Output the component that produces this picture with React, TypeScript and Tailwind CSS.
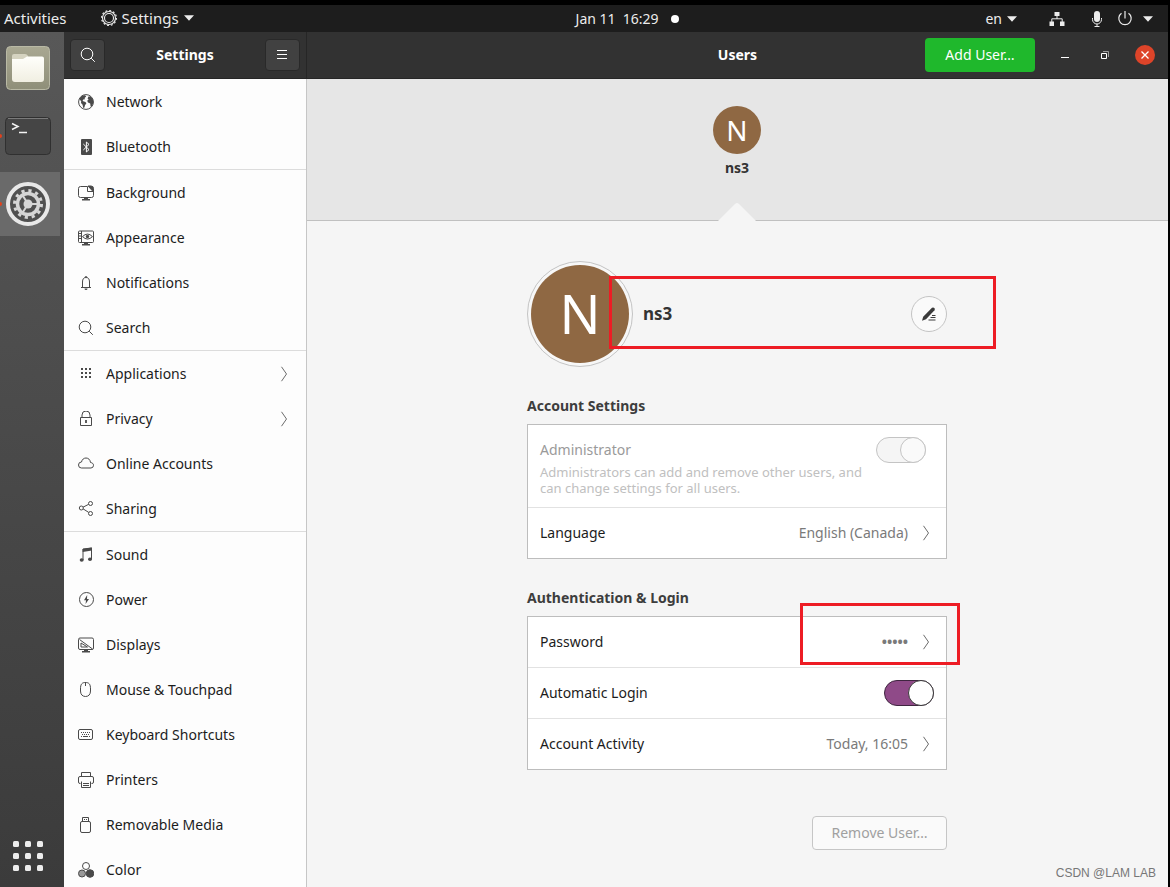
import React from 'react';

type IconProps = { children: React.ReactNode; className?: string };

function Glyph({ children, className = 'size-4' }: IconProps) {
  return (
    <svg viewBox="0 0 16 16" className={className} fill="none" stroke="currentColor" strokeWidth="1" aria-hidden="true">
      {children}
    </svg>
  );
}

const icons: Record<string, React.ReactNode> = {
  Network: (
    <>
      <circle cx="8" cy="8" r="7.4" />
      <path d="M1.2 5 3.8 1.8 7 1.2 8.2 2.6 6.6 4 7 5.2 5.2 5.6 4.6 7 7.4 8 8.4 9.2 7 11.2 6.4 13.6 5.2 14 4.6 10.8 3 9 3.2 7.2Z" fill="currentColor" stroke="none" />
      <path d="M9.6 4.4 10.4 2.6 12.6 2.4 15 5.6 15.4 9 13.8 12.2 12.6 12.6 12.2 9.4 10 8.6 9.2 6.8 10.6 5.4Z" fill="currentColor" stroke="none" />
    </>
  ),
  Bluetooth: (
    <>
      <rect x="3" y="0" width="11" height="16" rx="1" fill="currentColor" stroke="none" />
      <path d="M5.3 5 11 10.6 8.4 13V3L11 5.4 5.3 11" stroke="#fff" />
    </>
  ),
  Background: (
    <>
      <path d="M9.5 1.5h-7a2 2 0 0 0-2 2v7a2 2 0 0 0 2 2h11a2 2 0 0 0 2-2V6.5" />
      <path d="M10 1h3a2.5 2.5 0 0 1 2.5 2.5V7Z" fill="currentColor" />
      <path d="M9.5 1.5v5h6" />
      <path d="M6 12h4v2h2v1.5H4V14h2Z" fill="currentColor" stroke="none" />
    </>
  ),
  Appearance: (
    <>
      <rect x=".5" y="1" width="15" height="11.5" rx="1" />
      <path d="M3.5 1v11M1 3.5h2M1 6h2M1 8.5h2M4.5 6.6Q9.5 1.5 14.5 6.6 9.5 11.5 4.5 6.6Z" />
      <circle cx="9.5" cy="6.5" r="1.7" fill="currentColor" stroke="none" />
      <path d="M6 12h4v2h2v1.5H4V14h2Z" fill="currentColor" stroke="none" />
    </>
  ),
  Notifications: (
    <>
      <path d="M3 12.5h10M4.5 12.5V7a3.5 4.5 0 0 1 7 0v5.5M7 2.5a1 1 0 0 1 2 0" />
      <path d="M6.5 13.5h3a1.5 1.5 0 0 1-3 0Z" fill="currentColor" stroke="none" />
    </>
  ),
  Search: (
    <>
      <circle cx="7" cy="7" r="5.8" />
      <path d="m11.2 11.2 3.6 3.6" />
    </>
  ),
  Applications: (
    <path d="M3 3h2m2 0h2m2 0h2M3 7h2m2 0h2m2 0h2M3 11h2m2 0h2m2 0h2" strokeWidth="2" />
  ),
  Privacy: (
    <>
      <path d="M2.5 6.5h11v8h-11ZM4 6.5V4a4 4 0 0 1 8 0v2.5" />
      <path d="M8 9v3" strokeWidth="1.8" />
    </>
  ),
  'Online Accounts': (
    <path d="M3.500 12a3 3 0 0 1 0-6C4 3.500 5.800 2 8 2s4.200 1.500 4.500 4.500c1.800.2 3 1.200 3 2.800A2.700 2.700 0 0 1 13 12Z" />
  ),
  Sharing: (
    <>
      <circle cx="3.3" cy="7" r="2" />
      <circle cx="12.5" cy="2.5" r="2" />
      <circle cx="12.5" cy="12.5" r="2" />
      <path d="m5 6.200 5.700-2.900M5 7.800l5.700 3.600" />
    </>
  ),
  Sound: (
    <>
      <path d="M5 13V2l8.500-1v11" />
      <path d="M4.600 2 14 .6v3L4.600 5Z" fill="currentColor" stroke="none" />
      <ellipse cx="3.700" cy="13" rx="2" ry="1.800" fill="currentColor" stroke="none" />
      <ellipse cx="12" cy="12.200" rx="2" ry="1.800" fill="currentColor" stroke="none" />
    </>
  ),
  Power: (
    <>
      <circle cx="8.500" cy="7.500" r="7" />
      <path d="M9.200 3 6 8.200h2L7.600 12 11 7H9Z" fill="currentColor" stroke="none" />
    </>
  ),
  Displays: (
    <>
      <rect x=".5" y="1" width="15" height="11.5" rx="1.5" />
      <path d="M1.500 2.500 14.500 12M3 6v4h6.500Z" />
      <path d="M6 12h4v2h2v1.500H4V14h2Z" fill="currentColor" stroke="none" />
    </>
  ),
  'Mouse & Touchpad': (
    <>
      <path d="M7.500.5C4 .5 2.500 2 2.500 7v2c0 3.500 2 5.500 5 5.500s5-2 5-5.500V7c0-5-1.500-6.500-5-6.500Z" />
      <path d="M7.500 0v4" />
    </>
  ),
  'Keyboard Shortcuts': (
    <>
      <rect x=".5" y="2.500" width="14" height="10" rx="1.500" />
      <path d="M3 5.500h1m1 0h1m1 0h1m1 0h1m1 0h1M4 7.500h1m1 0h1m1 0h1m1 0h1M3 9.500h1m1 0h5m1 0h1" />
    </>
  ),
  Printers: (
    <>
      <path d="M3.500 4V.5h9V4M2.500 11.500H2A1.500 1.500 0 0 1 .5 10V6A1.500 1.500 0 0 1 2 4.500h12A1.500 1.500 0 0 1 15.500 6v4a1.500 1.500 0 0 1-1.500 1.500h-.5" />
      <path d="M3.500 9.500v6h9v-6M5 11.500h6M5 13.500h6" />
    </>
  ),
  'Removable Media': (
    <>
      <rect x="2.500" y="4.500" width="10" height="11" rx="1.500" />
      <path d="M4.500 4V.5h6V4M6 2.500h1m1 0h1" />
    </>
  ),
  Color: (
    <>
      <circle cx="8" cy="4" r="3.500" fill="#fff" />
      <circle cx="4" cy="11.500" r="3.500" fill="#999" />
      <circle cx="12" cy="11.500" r="3.800" fill="currentColor" />
    </>
  ),
};

const groups = [
  ['Network', 'Bluetooth'],
  ['Background', 'Appearance', 'Notifications', 'Search'],
  ['Applications', 'Privacy', 'Online Accounts', 'Sharing'],
  ['Sound', 'Power', 'Displays', 'Mouse & Touchpad', 'Keyboard Shortcuts', 'Printers', 'Removable Media', 'Color'],
];

const submenus = ['Applications', 'Privacy'];

function Chevron() {
  return (
    <svg viewBox="0 0 8 16" className="h-4 w-2 shrink-0" fill="none" stroke="#6b6b6b" aria-hidden="true">
      <path d="m1.500.8 5 7.200-5 7.200" />
    </svg>
  );
}

function Caret() {
  return (
    <svg viewBox="0 0 10 6" className="h-1.5 w-2.5" fill="currentColor" aria-hidden="true">
      <path d="M0 .3h10L5 5.800Z" />
    </svg>
  );
}

function TopBar() {
  return (
    <header className="grid h-8 shrink-0 grid-cols-[574fr_auto_488fr] items-center border-t-5 border-black bg-[#1d1d1d] text-[#ececec]">
      <div className="flex items-center gap-[34px] pl-1 text-[15px]">
        <button>Activities</button>
        <button className="flex items-center gap-[5px]">
          <svg viewBox="0 0 16 16" className="size-4" fill="none" stroke="currentColor" aria-hidden="true">
            <circle cx="8" cy="8" r="7.4" strokeWidth="1.200" strokeDasharray="1.900 1.975" />
            <circle cx="8" cy="8" r="6.500" strokeWidth="1.100" />
            <circle cx="8" cy="8" r="4.500" strokeWidth="1.100" />
          </svg>
          <span>Settings</span>
          <Caret />
        </button>
      </div>
      <button className="flex items-center gap-3">
        <span className="whitespace-pre">Jan 11  16:29</span>
        <span className="size-2 rounded-full bg-white" />
      </button>
      <div className="flex items-center justify-end pr-[15px]">
        <button className="mr-8 flex items-center gap-[5px]">
          <span>en</span>
          <Caret />
        </button>
        <button className="flex items-center" aria-label="System menu">
          <Glyph className="mr-6 size-4">
            <path d="M5.500 1h5v4h-5ZM.5 10.500h4.500V15H.5ZM11 10.500h4.500V15H11Z" fill="currentColor" stroke="none" />
            <path d="M8 5v3M2.800 11V7.800h10.400V11" />
          </Glyph>
          <Glyph className="mr-3 size-4">
            <rect x="5" y="0" width="6" height="11" rx="3" fill="currentColor" stroke="none" />
            <path d="M3.500 7v1.500a4.500 4.500 0 0 0 9 0V7M8 13v2.500M5.500 15.500h5" />
          </Glyph>
          <Glyph className="mr-2.5 size-4">
            <path d="M4.500 2.300a6.200 6.200 0 1 0 7 0M8 0v7.500" strokeWidth="1.200" />
          </Glyph>
          <Caret />
        </button>
      </div>
    </header>
  );
}

function Launcher() {
  return (
    <nav className="flex w-16 shrink-0 flex-col gap-1 bg-linear-to-b from-[#585858] via-[#494949] to-[#3b3b3b] pt-1 pr-1">
      <button className="flex h-16 items-center justify-center pr-1" aria-label="Files">
        <svg viewBox="0 0 44 44" className="size-11">
          <defs>
            <linearGradient id="paper" x1="0" y1="0" x2="0" y2="1">
              <stop offset="0" stopColor="#fffffb" />
              <stop offset="1" stopColor="#f1efe2" />
            </linearGradient>
            <linearGradient id="case" x1="0" y1="0" x2="0" y2="1">
              <stop offset="0" stopColor="#a9a892" />
              <stop offset="1" stopColor="#8f8f79" />
            </linearGradient>
          </defs>
          <rect x=".5" y=".5" width="43" height="43" rx="4" fill="url(#case)" stroke="#b9b9a5" />
          <path d="M6 13V10q0-2 2-2h11q2 0 3 2l1 3Z" fill="#d5d3c0" />
          <path d="M6 13h11l4-2.500h15q2 0 2 2V33q0 3-3 3H9q-3 0-3-3Z" fill="url(#paper)" />
        </svg>
      </button>
      <button className="relative flex h-16 items-center justify-center pr-1" aria-label="Terminal">
        <span className="absolute left-0 h-1 w-0.5 rounded-r bg-[#e2401c]" />
        <svg viewBox="0 0 46 38" className="h-[38px] w-[46px]" fill="none">
          <rect x=".5" y=".5" width="45" height="37" rx="4" fill="#454545" stroke="#303030" />
          <path d="M3 1.500h40" stroke="#7a7a7a" />
          <path d="m7 6.500 6 3-6 3M14 15.500h8" stroke="#f3f3f3" strokeWidth="1.500" />
        </svg>
      </button>
      <button className="relative flex h-16 items-center justify-center bg-[#6a6a6a] pr-1" aria-label="Settings">
        <span className="absolute left-0 h-1 w-0.5 rounded-r bg-[#e2401c]" />
        <svg viewBox="0 0 44 44" className="size-11" fill="none" stroke="#d6d6d6">
          <circle cx="22" cy="22" r="20" fill="#505050" stroke="#e8e8e8" strokeWidth="4" />
          <circle cx="22" cy="22" r="13.500" strokeWidth="3" strokeDasharray="3.200 3.868" />
          <circle cx="22" cy="22" r="10.500" strokeWidth="3.500" />
          <circle cx="22" cy="22" r="4.500" fill="#d6d6d6" stroke="none" />
          <path d="M22 22h9M22 22l-5-8M22 22l-5 8" strokeWidth="2" />
        </svg>
      </button>
      <button className="mt-auto flex h-[62px] items-center justify-center pr-1" aria-label="Show Applications">
        <svg viewBox="0 0 30 30" className="size-[30px]" fill="#ededed">
          {[0, 12, 24].map((y) =>
            [0, 12, 24].map((x) => <rect key={`${x}-${y}`} x={x} y={y} width="6" height="6" rx="1.500" />)
          )}
        </svg>
      </button>
    </nav>
  );
}

function Sidebar() {
  return (
    <aside className="flex w-[243px] shrink-0 flex-col border-r border-[#c6c6c6] bg-[#fdfdfd]">
      <div className="-mr-px flex h-[47px] shrink-0 items-center justify-between border-r border-b border-[#262626] bg-[#323232] px-1.5 text-white">
        <button className="flex h-8 w-[35px] items-center justify-center rounded border border-[#292929] bg-[#414141]" aria-label="Search">
          <Glyph>{icons.Search}</Glyph>
        </button>
        <h2 className="font-bold">Settings</h2>
        <button className="flex h-8 w-[35px] items-center justify-center rounded border border-[#292929] bg-[#414141]" aria-label="Menu">
          <Glyph>
            <path d="M3 3.500h10M3 7.500h10M3 11.500h10" />
          </Glyph>
        </button>
      </div>
      <div className="flex-1 overflow-hidden">
        {groups.map((group) => (
          <ul key={group[0]} className="border-b border-[#dcdcdc]">
            {group.map((name) => (
              <li key={name}>
                <a href="#" className="flex h-[45px] items-center gap-3 pr-[18px] pl-3.5 text-[#1c1c1c]">
                  <span className="text-[#4a4a4a]">
                    <Glyph>{icons[name]}</Glyph>
                  </span>
                  <span className="flex-1">{name}</span>
                  {submenus.includes(name) && <Chevron />}
                </a>
              </li>
            ))}
          </ul>
        ))}
      </div>
    </aside>
  );
}

function TitleBar() {
  return (
    <div className="grid h-[47px] shrink-0 grid-cols-[1fr_auto_1fr] items-center border-b border-[#262626] bg-[#323232] px-[13px] text-white">
      <span />
      <h1 className="font-bold">Users</h1>
      <div className="flex items-center justify-end">
        <button className="mr-[22px] h-[34px] w-[110px] rounded bg-[#1fb82c]">Add User…</button>
        <button className="mr-6 flex size-4 items-center justify-center" aria-label="Minimize">
          <Glyph>
            <path d="M4 10.500h8" />
          </Glyph>
        </button>
        <button className="mr-[22px] flex size-4 items-center justify-center" aria-label="Restore">
          <Glyph>
            <path d="M4.500 6.500h5v5h-5Z" />
            <path d="M6 4.500h5.500V10" stroke="#9a9a9a" />
          </Glyph>
        </button>
        <button className="flex size-5 items-center justify-center rounded-full bg-[#dd4429]" aria-label="Close">
          <Glyph>
            <path d="m4.500 4.500 7 7m0-7-7 7" strokeWidth="1.300" />
          </Glyph>
        </button>
      </div>
    </div>
  );
}

function AccountSettings() {
  return (
    <section>
      <h3 className="mb-2 font-bold text-[#3d3d3d]">Account Settings</h3>
      <div className="border border-[#bdbdbd] bg-white">
        <div className="flex h-[83px] items-start justify-between border-b border-[#e2e2e2] pt-3 pr-5 pl-3">
          <div className="pt-[3px]">
            <label htmlFor="administrator" className="block text-[#9a9a9a]">Administrator</label>
            <p className="w-[328px] pt-1 text-[13px] leading-4 text-[#c0c0c0]">
              Administrators can add and remove other users, and can change settings for all users.
            </p>
          </div>
          <input
            id="administrator"
            type="checkbox"
            disabled
            defaultChecked
            className="flex h-[26px] w-[50px] shrink-0 appearance-none justify-end rounded-full border border-[#c4c4c4] bg-[#f5f5f5] before:-m-px before:size-[26px] before:rounded-full before:border before:border-[#c4c4c4] before:bg-[#fafafa]"
          />
        </div>
        <button className="flex h-[50px] w-full items-center pr-4 pl-3 text-left">
          <span className="flex-1 text-[#1c1c1c]">Language</span>
          <span className="mr-3.5 text-[#7a7a7a]">English (Canada)</span>
          <Chevron />
        </button>
      </div>
    </section>
  );
}

function Authentication() {
  return (
    <section>
      <h3 className="mb-2 font-bold text-[#3d3d3d]">Authentication &amp; Login</h3>
      <div className="border border-[#bdbdbd] bg-white">
        <div className="relative">
          <button className="flex h-[51px] w-full items-center border-b border-[#e2e2e2] pr-4 pl-3 text-left">
            <span className="flex-1 text-[#1c1c1c]">Password</span>
            <span className="mr-3.5 font-bold text-[#7a7a7a]">•••••</span>
            <Chevron />
          </button>
          <div className="pointer-events-none absolute -top-3.5 -right-3.5 h-[62px] w-40 border-3 border-[#ed1c24]" />
        </div>
        <div className="flex h-[51px] items-center justify-between border-b border-[#e2e2e2] px-3">
          <label htmlFor="autologin" className="text-[#1c1c1c]">Automatic Login</label>
          <input
            id="autologin"
            type="checkbox"
            defaultChecked
            className="flex h-[26px] w-[50px] appearance-none rounded-full border border-[#3f2540] bg-[#8f4a88] before:-m-px before:size-[26px] before:rounded-full before:border before:border-[#3a3a3a] before:bg-white checked:justify-end"
          />
        </div>
        <button className="flex h-[50px] w-full items-center pr-4 pl-3 text-left">
          <span className="flex-1 text-[#1c1c1c]">Account Activity</span>
          <span className="mr-3.5 text-[#7a7a7a]">Today, 16:05</span>
          <Chevron />
        </button>
      </div>
    </section>
  );
}

function UsersPanel() {
  return (
    <main className="relative flex min-w-0 flex-1 flex-col bg-[#f5f5f5]">
      <TitleBar />
      {/* user carousel */}
      <div className="relative flex h-[142px] shrink-0 flex-col items-center border-b border-[#c0c0c0] bg-[#e6e6e6] pt-[27px] pr-px">
        <button className="flex flex-col items-center gap-1">
          <span className="flex size-12 items-center justify-center rounded-full bg-[#8f6843] text-[28px] text-white">N</span>
          <span className="font-bold text-[#333]">ns3</span>
        </button>
        <svg viewBox="0 0 38 19" className="absolute -bottom-px h-[19px] w-[38px]" aria-hidden="true">
          <path d="M0 19 17 2q2-2 4 0l17 17Z" fill="#f5f5f5" />
        </svg>
      </div>
      <div className="mx-auto w-[421px] pt-10 pr-px">
        <div className="relative flex items-center">
          <button className="mr-2.5 size-[106px] rounded-full border border-[#c4c4c4] bg-[#f7f7f7] p-[3px]" aria-label="Change picture">
            <span className="flex size-full items-center justify-center rounded-full bg-[#8f6843] text-[54px] text-white">N</span>
          </button>
          <h2 className="flex-1 text-[17px] font-bold text-[#333]">ns3</h2>
          <button className="flex size-9 items-center justify-center rounded-full border border-[#c4c4c4] bg-[#fafafa] text-[#3a3a3a]" aria-label="Edit name">
            <Glyph>
              <path d="m1 14.800 1.200-4L11 1.800q1.300-.8 2.300.2 1 1.100.2 2.300L5 13.200Z" fill="currentColor" stroke="none" />
              <path d="M11 9.500h3.500M9.500 11.500h5M7.500 14h7" />
            </Glyph>
          </button>
          <div className="pointer-events-none absolute top-[15px] left-[82px] h-[73px] w-[387px] border-3 border-[#ed1c24]" />
        </div>
        <div className="flex flex-col gap-[29px] pt-[29px]">
          <AccountSettings />
          <Authentication />
        </div>
        <button disabled className="mt-[46px] ml-auto block h-[34px] w-[135px] rounded border border-[#c6c6c6] bg-[#fafafa] text-[#a0a0a0]">
          Remove User…
        </button>
      </div>
      <span className="absolute right-3 bottom-1.5 font-['Liberation_Sans',sans-serif] text-xs leading-4 text-[#777]">CSDN @LAM LAB</span>
    </main>
  );
}

export default function App() {
  return (
    <div className="flex h-screen flex-col overflow-hidden border-r-2 border-black bg-[#f5f5f5] font-['Noto_Sans',sans-serif] text-sm">
      <TopBar />
      <div className="flex min-h-0 flex-1">
        <Launcher />
        <Sidebar />
        <UsersPanel />
      </div>
    </div>
  );
}
